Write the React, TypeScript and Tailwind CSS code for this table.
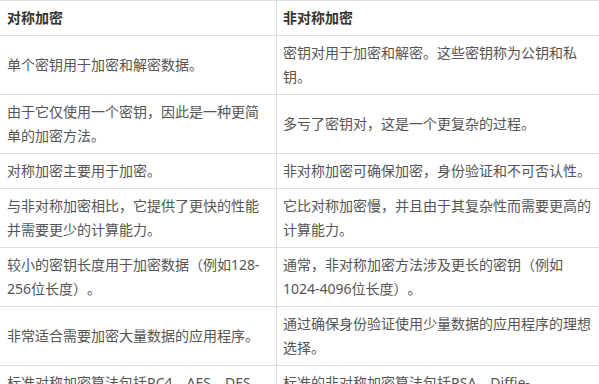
const rows: [string, string][] = [
  ["单个密钥用于加密和解密数据。", "密钥对用于加密和解密。这些密钥称为公钥和私钥。"],
  ["由于它仅使用一个密钥，因此是一种更简单的加密方法。", "多亏了密钥对，这是一个更复杂的过程。"],
  ["对称加密主要用于加密。", "非对称加密可确保加密，身份验证和不可否认性。"],
  ["与非对称加密相比，它提供了更快的性能并需要更少的计算能力。", "它比对称加密慢，并且由于其复杂性而需要更高的计算能力。"],
  ["较小的密钥长度用于加密数据（例如128-\u200B256位长度）。", "通常，非对称加密方法涉及更长的密钥（例如1024-\u200B4096位长度）。"],
  ["非常适合需要加密大量数据的应用程序。", "通过确保身份验证使用少量数据的应用程序的理想选择。"],
  ["标准对称加密算法包括RC4，AES，DES，3DES和QUAD。", "标准的非对称加密算法包括RSA，Diffie-\u200BHellman，ECC，El Gamal和DSA。"],
];

export default function App() {
  return (
    <main className="h-[384px] w-[599px] overflow-hidden bg-white font-['Noto_Sans','Noto_Sans_CJK_SC',sans-serif] text-[14px] leading-[24px] [text-spacing-trim:space-all]">
      <div className="w-[599px] border-t border-[#dddddd]">
        {/* header */}
        <div className="flex border-b border-[#dddddd] font-bold text-[#333333]">
          <div className="w-[277px] shrink-0 border-r border-[#dddddd] px-[7px] py-[5px]">对称加密</div>
          <div className="flex-1 px-[6px] py-[5px]">非对称加密</div>
        </div>
        {rows.map(([a, b]) => (
          <div key={a} className="flex border-b border-[#dddddd] text-[#555555]">
            <div className="flex w-[277px] shrink-0 items-center border-r border-[#dddddd] px-[7px] py-[5px]">
              <span>{a}</span>
            </div>
            <div className="flex flex-1 items-center px-[6px] py-[5px]">
              <span>{b}</span>
            </div>
          </div>
        ))}
      </div>
    </main>
  );
}
